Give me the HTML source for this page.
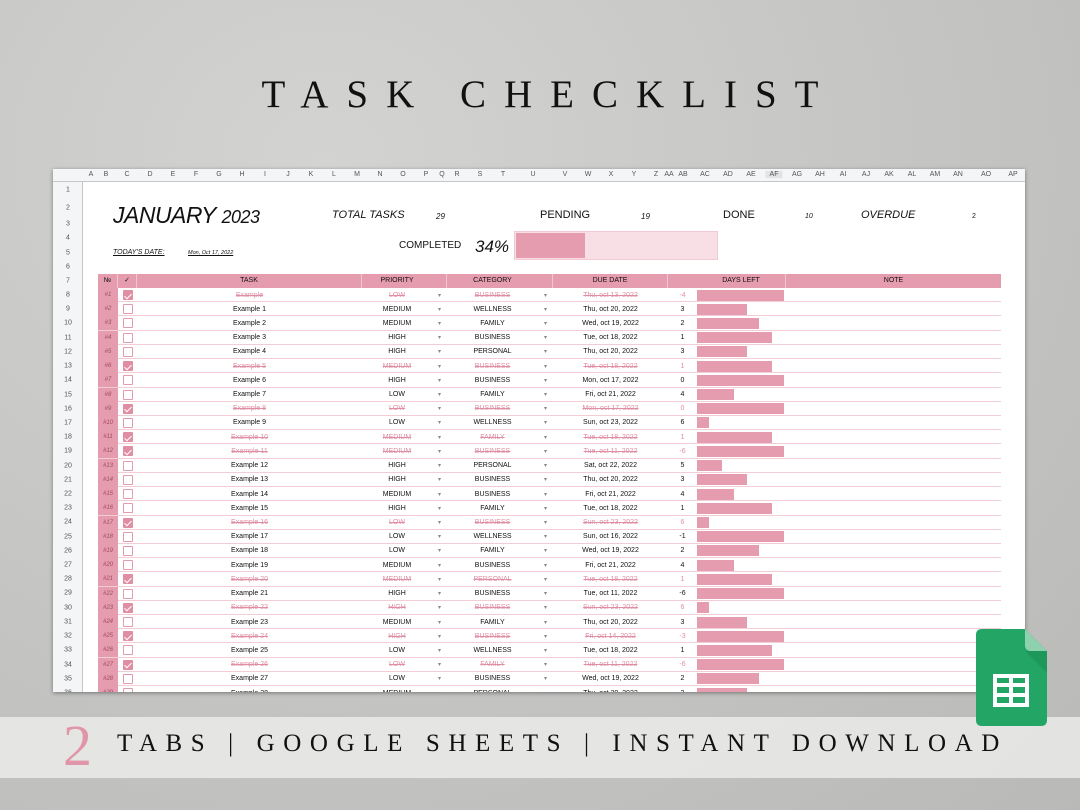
<!DOCTYPE html>
<html><head><meta charset="utf-8"><style>
*{margin:0;padding:0;box-sizing:border-box}
body{width:1080px;height:810px;overflow:hidden;position:relative;background:#c9c9c7;font-family:"Liberation Sans",sans-serif}
.bg{position:absolute;inset:0;background:radial-gradient(ellipse at 30% 20%,#d3d3d1 0,#c6c6c4 50%,#b9b9b7 100%)}
.title{position:absolute;top:72px;left:0;width:1080px;text-align:center;font-family:"Liberation Serif",serif;font-size:39px;letter-spacing:18px;color:#111;padding-left:18px}
.sheet{position:absolute;left:53px;top:169px;width:972px;height:523px;background:#fff;overflow:hidden;box-shadow:0 1px 4px rgba(0,0,0,.4)}
.colhdr{position:absolute;left:0;top:0;width:972px;height:13px;background:#f4f5f6;border-bottom:1px solid #c8c8c8;font-size:7px;color:#555}
.colhdr span{position:absolute;top:2px;transform:translateX(-50%)}
.gut{position:absolute;left:0;top:13px;width:30px;height:510px;background:#f4f5f6;border-right:1px solid #c8c8c8;font-size:7px;color:#555}
.gut span{position:absolute;left:0;width:30px;text-align:center;transform:translateY(-50%)}
.t{position:absolute;color:#111;white-space:nowrap}
.tbl{position:absolute;left:45px;top:105px;width:903px}
.r{display:grid;grid-template-columns:20px 19px 225px 70px 15px 91px 15px 115px 29px 89px 215px;height:14.22px;border-bottom:1px solid #f3cdd6;font-size:7px;color:#111;align-items:center;text-align:center}
.h{background:#e59caf;height:14px;border-bottom:none;font-size:7px}
.h div{border-right:1px solid #f2c6d1;height:100%;line-height:14px}
.n{background:#e59caf;color:#a04a60;font-size:6px;height:100%;line-height:14px;font-style:italic}
.cb{width:10px;height:10px;border:1px solid #e59caf;border-radius:1px;margin:0 auto;background:#fff}
.d .cb{background:#e08ea3;border-color:#e08ea3;position:relative}
.d .cb:after{content:"";position:absolute;left:2.5px;top:0.5px;width:3px;height:6px;border:solid #fff;border-width:0 1.3px 1.3px 0;transform:rotate(45deg)}
.d{color:#e08ea3}
.d .s{text-decoration:line-through}
.a{color:#888;font-size:6px}
.bar{height:11px;background:#e59caf;margin-left:0}
.bc{text-align:left;height:100%;display:flex;align-items:center}
.band{position:absolute;left:0;top:717px;width:1080px;height:61px;background:rgba(238,238,236,.8)}
.btxt{position:absolute;top:730px;left:117px;font-family:"Liberation Serif",serif;font-size:25px;letter-spacing:8.6px;color:#111;white-space:nowrap}
.two{position:absolute;top:712px;left:63px;font-family:"Liberation Serif",serif;font-size:58px;color:#e095a8}
</style></head><body>
<div class="bg"></div>
<div class="title">TASK CHECKLIST</div>
<div class="sheet">
<div class="colhdr">
<span style="left:38px">A</span><span style="left:53px">B</span><span style="left:74px">C</span><span style="left:97px">D</span><span style="left:120px">E</span><span style="left:143px">F</span><span style="left:166px">G</span><span style="left:189px">H</span><span style="left:212px">I</span><span style="left:235px">J</span><span style="left:258px">K</span><span style="left:281px">L</span><span style="left:304px">M</span><span style="left:327px">N</span><span style="left:350px">O</span><span style="left:373px">P</span><span style="left:389px">Q</span><span style="left:404px">R</span><span style="left:427px">S</span><span style="left:450px">T</span><span style="left:480px">U</span><span style="left:512px">V</span><span style="left:535px">W</span><span style="left:558px">X</span><span style="left:581px">Y</span><span style="left:603px">Z</span><span style="left:616px">AA</span><span style="left:630px">AB</span><span style="left:652px">AC</span><span style="left:675px">AD</span><span style="left:698px">AE</span><span style="left:721px;background:#e2e3e5;padding:0 4px">AF</span><span style="left:744px">AG</span><span style="left:767px">AH</span><span style="left:790px">AI</span><span style="left:813px">AJ</span><span style="left:836px">AK</span><span style="left:859px">AL</span><span style="left:882px">AM</span><span style="left:905px">AN</span><span style="left:933px">AO</span><span style="left:960px">AP</span>
</div>
<div class="gut">
<span style="top:8px">1</span><span style="top:26px">2</span><span style="top:42px">3</span><span style="top:56px">4</span><span style="top:71px">5</span><span style="top:85px">6</span><span style="top:99px">7</span>
<span style="top:113px">8</span><span style="top:127px">9</span><span style="top:141px">10</span><span style="top:156px">11</span><span style="top:170px">12</span><span style="top:184px">13</span><span style="top:198px">14</span><span style="top:213px">15</span><span style="top:227px">16</span><span style="top:241px">17</span><span style="top:255px">18</span><span style="top:269px">19</span><span style="top:284px">20</span><span style="top:298px">21</span><span style="top:312px">22</span><span style="top:326px">23</span><span style="top:340px">24</span><span style="top:355px">25</span><span style="top:369px">26</span><span style="top:383px">27</span><span style="top:397px">28</span><span style="top:411px">29</span><span style="top:426px">30</span><span style="top:440px">31</span><span style="top:454px">32</span><span style="top:468px">33</span><span style="top:483px">34</span><span style="top:497px">35</span><span style="top:511px">36</span>
</div>
<div class="t" style="left:60px;top:33px;font-size:23px;font-style:italic;letter-spacing:-0.5px">JANUARY <span style="font-size:18px">2023</span></div>
<div class="t" style="left:60px;top:80px;font-size:7px;font-style:italic;text-decoration:underline">TODAY'S DATE:</div>
<div class="t" style="left:135px;top:81px;font-size:5.5px;font-style:italic;text-decoration:underline">Mon, Oct 17, 2022</div>
<div class="t" style="left:279px;top:40px;font-size:11px;font-style:italic">TOTAL TASKS</div>
<div class="t" style="left:383px;top:43px;font-size:8px;font-style:italic">29</div>
<div class="t" style="left:487px;top:40px;font-size:11px">PENDING</div>
<div class="t" style="left:588px;top:43px;font-size:8px;font-style:italic">19</div>
<div class="t" style="left:670px;top:40px;font-size:11px">DONE</div>
<div class="t" style="left:752px;top:44px;font-size:7px;font-style:italic">10</div>
<div class="t" style="left:808px;top:40px;font-size:11px;font-style:italic">OVERDUE</div>
<div class="t" style="left:919px;top:44px;font-size:7px">2</div>
<div class="t" style="left:346px;top:71px;font-size:10px">COMPLETED</div>
<div class="t" style="left:422px;top:68px;font-size:17px;font-style:italic">34%</div>
<div style="position:absolute;left:461px;top:62px;width:204px;height:29px;background:#f8dfe5;border:1px solid #f3cad4"></div>
<div style="position:absolute;left:463px;top:64px;width:69px;height:25px;background:#e59caf"></div>
<div class="tbl">
<div class="r h"><div>№</div><div>✓</div><div>TASK</div><div style="border:none">PRIORITY</div><div></div><div style="border:none">CATEGORY</div><div></div><div>DUE DATE</div><div style="border:none"></div><div>DAYS LEFT</div><div style="border:none">NOTE</div></div>
<div class="r d"><div class="n">#1</div><div><div class="cb"></div></div><div class="s">Example</div><div class="s">LOW</div><div class="a">▾</div><div class="s">BUSINESS</div><div class="a">▾</div><div class="s">Thu, oct 13, 2022</div><div>-4</div><div class="bc"><div class="bar" style="width:87px"></div></div><div></div></div>
<div class="r"><div class="n">#2</div><div><div class="cb"></div></div><div>Example 1</div><div>MEDIUM</div><div class="a">▾</div><div>WELLNESS</div><div class="a">▾</div><div>Thu, oct 20, 2022</div><div>3</div><div class="bc"><div class="bar" style="width:50px"></div></div><div></div></div>
<div class="r"><div class="n">#3</div><div><div class="cb"></div></div><div>Example 2</div><div>MEDIUM</div><div class="a">▾</div><div>FAMILY</div><div class="a">▾</div><div>Wed, oct 19, 2022</div><div>2</div><div class="bc"><div class="bar" style="width:62px"></div></div><div></div></div>
<div class="r"><div class="n">#4</div><div><div class="cb"></div></div><div>Example 3</div><div>HIGH</div><div class="a">▾</div><div>BUSINESS</div><div class="a">▾</div><div>Tue, oct 18, 2022</div><div>1</div><div class="bc"><div class="bar" style="width:75px"></div></div><div></div></div>
<div class="r"><div class="n">#5</div><div><div class="cb"></div></div><div>Example 4</div><div>HIGH</div><div class="a">▾</div><div>PERSONAL</div><div class="a">▾</div><div>Thu, oct 20, 2022</div><div>3</div><div class="bc"><div class="bar" style="width:50px"></div></div><div></div></div>
<div class="r d"><div class="n">#6</div><div><div class="cb"></div></div><div class="s">Example 5</div><div class="s">MEDIUM</div><div class="a">▾</div><div class="s">BUSINESS</div><div class="a">▾</div><div class="s">Tue, oct 18, 2022</div><div>1</div><div class="bc"><div class="bar" style="width:75px"></div></div><div></div></div>
<div class="r"><div class="n">#7</div><div><div class="cb"></div></div><div>Example 6</div><div>HIGH</div><div class="a">▾</div><div>BUSINESS</div><div class="a">▾</div><div>Mon, oct 17, 2022</div><div>0</div><div class="bc"><div class="bar" style="width:87px"></div></div><div></div></div>
<div class="r"><div class="n">#8</div><div><div class="cb"></div></div><div>Example 7</div><div>LOW</div><div class="a">▾</div><div>FAMILY</div><div class="a">▾</div><div>Fri, oct 21, 2022</div><div>4</div><div class="bc"><div class="bar" style="width:37px"></div></div><div></div></div>
<div class="r d"><div class="n">#9</div><div><div class="cb"></div></div><div class="s">Example 8</div><div class="s">LOW</div><div class="a">▾</div><div class="s">BUSINESS</div><div class="a">▾</div><div class="s">Mon, oct 17, 2022</div><div>0</div><div class="bc"><div class="bar" style="width:87px"></div></div><div></div></div>
<div class="r"><div class="n">#10</div><div><div class="cb"></div></div><div>Example 9</div><div>LOW</div><div class="a">▾</div><div>WELLNESS</div><div class="a">▾</div><div>Sun, oct 23, 2022</div><div>6</div><div class="bc"><div class="bar" style="width:12px"></div></div><div></div></div>
<div class="r d"><div class="n">#11</div><div><div class="cb"></div></div><div class="s">Example 10</div><div class="s">MEDIUM</div><div class="a">▾</div><div class="s">FAMILY</div><div class="a">▾</div><div class="s">Tue, oct 18, 2022</div><div>1</div><div class="bc"><div class="bar" style="width:75px"></div></div><div></div></div>
<div class="r d"><div class="n">#12</div><div><div class="cb"></div></div><div class="s">Example 11</div><div class="s">MEDIUM</div><div class="a">▾</div><div class="s">BUSINESS</div><div class="a">▾</div><div class="s">Tue, oct 11, 2022</div><div>-6</div><div class="bc"><div class="bar" style="width:87px"></div></div><div></div></div>
<div class="r"><div class="n">#13</div><div><div class="cb"></div></div><div>Example 12</div><div>HIGH</div><div class="a">▾</div><div>PERSONAL</div><div class="a">▾</div><div>Sat, oct 22, 2022</div><div>5</div><div class="bc"><div class="bar" style="width:25px"></div></div><div></div></div>
<div class="r"><div class="n">#14</div><div><div class="cb"></div></div><div>Example 13</div><div>HIGH</div><div class="a">▾</div><div>BUSINESS</div><div class="a">▾</div><div>Thu, oct 20, 2022</div><div>3</div><div class="bc"><div class="bar" style="width:50px"></div></div><div></div></div>
<div class="r"><div class="n">#15</div><div><div class="cb"></div></div><div>Example 14</div><div>MEDIUM</div><div class="a">▾</div><div>BUSINESS</div><div class="a">▾</div><div>Fri, oct 21, 2022</div><div>4</div><div class="bc"><div class="bar" style="width:37px"></div></div><div></div></div>
<div class="r"><div class="n">#16</div><div><div class="cb"></div></div><div>Example 15</div><div>HIGH</div><div class="a">▾</div><div>FAMILY</div><div class="a">▾</div><div>Tue, oct 18, 2022</div><div>1</div><div class="bc"><div class="bar" style="width:75px"></div></div><div></div></div>
<div class="r d"><div class="n">#17</div><div><div class="cb"></div></div><div class="s">Example 16</div><div class="s">LOW</div><div class="a">▾</div><div class="s">BUSINESS</div><div class="a">▾</div><div class="s">Sun, oct 23, 2022</div><div>6</div><div class="bc"><div class="bar" style="width:12px"></div></div><div></div></div>
<div class="r"><div class="n">#18</div><div><div class="cb"></div></div><div>Example 17</div><div>LOW</div><div class="a">▾</div><div>WELLNESS</div><div class="a">▾</div><div>Sun, oct 16, 2022</div><div>-1</div><div class="bc"><div class="bar" style="width:87px"></div></div><div></div></div>
<div class="r"><div class="n">#19</div><div><div class="cb"></div></div><div>Example 18</div><div>LOW</div><div class="a">▾</div><div>FAMILY</div><div class="a">▾</div><div>Wed, oct 19, 2022</div><div>2</div><div class="bc"><div class="bar" style="width:62px"></div></div><div></div></div>
<div class="r"><div class="n">#20</div><div><div class="cb"></div></div><div>Example 19</div><div>MEDIUM</div><div class="a">▾</div><div>BUSINESS</div><div class="a">▾</div><div>Fri, oct 21, 2022</div><div>4</div><div class="bc"><div class="bar" style="width:37px"></div></div><div></div></div>
<div class="r d"><div class="n">#21</div><div><div class="cb"></div></div><div class="s">Example 20</div><div class="s">MEDIUM</div><div class="a">▾</div><div class="s">PERSONAL</div><div class="a">▾</div><div class="s">Tue, oct 18, 2022</div><div>1</div><div class="bc"><div class="bar" style="width:75px"></div></div><div></div></div>
<div class="r"><div class="n">#22</div><div><div class="cb"></div></div><div>Example 21</div><div>HIGH</div><div class="a">▾</div><div>BUSINESS</div><div class="a">▾</div><div>Tue, oct 11, 2022</div><div>-6</div><div class="bc"><div class="bar" style="width:87px"></div></div><div></div></div>
<div class="r d"><div class="n">#23</div><div><div class="cb"></div></div><div class="s">Example 22</div><div class="s">HIGH</div><div class="a">▾</div><div class="s">BUSINESS</div><div class="a">▾</div><div class="s">Sun, oct 23, 2022</div><div>6</div><div class="bc"><div class="bar" style="width:12px"></div></div><div></div></div>
<div class="r"><div class="n">#24</div><div><div class="cb"></div></div><div>Example 23</div><div>MEDIUM</div><div class="a">▾</div><div>FAMILY</div><div class="a">▾</div><div>Thu, oct 20, 2022</div><div>3</div><div class="bc"><div class="bar" style="width:50px"></div></div><div></div></div>
<div class="r d"><div class="n">#25</div><div><div class="cb"></div></div><div class="s">Example 24</div><div class="s">HIGH</div><div class="a">▾</div><div class="s">BUSINESS</div><div class="a">▾</div><div class="s">Fri, oct 14, 2022</div><div>-3</div><div class="bc"><div class="bar" style="width:87px"></div></div><div></div></div>
<div class="r"><div class="n">#26</div><div><div class="cb"></div></div><div>Example 25</div><div>LOW</div><div class="a">▾</div><div>WELLNESS</div><div class="a">▾</div><div>Tue, oct 18, 2022</div><div>1</div><div class="bc"><div class="bar" style="width:75px"></div></div><div></div></div>
<div class="r d"><div class="n">#27</div><div><div class="cb"></div></div><div class="s">Example 26</div><div class="s">LOW</div><div class="a">▾</div><div class="s">FAMILY</div><div class="a">▾</div><div class="s">Tue, oct 11, 2022</div><div>-6</div><div class="bc"><div class="bar" style="width:87px"></div></div><div></div></div>
<div class="r"><div class="n">#28</div><div><div class="cb"></div></div><div>Example 27</div><div>LOW</div><div class="a">▾</div><div>BUSINESS</div><div class="a">▾</div><div>Wed, oct 19, 2022</div><div>2</div><div class="bc"><div class="bar" style="width:62px"></div></div><div></div></div>
<div class="r"><div class="n">#29</div><div><div class="cb"></div></div><div>Example 28</div><div>MEDIUM</div><div class="a">▾</div><div>PERSONAL</div><div class="a">▾</div><div>Thu, oct 20, 2022</div><div>3</div><div class="bc"><div class="bar" style="width:50px"></div></div><div></div></div>
</div>
</div>
<div class="band"></div>
<div class="two">2</div>
<div class="btxt">TABS | GOOGLE SHEETS | INSTANT DOWNLOAD</div>
<svg style="position:absolute;left:976px;top:629px" width="71" height="97" viewBox="0 0 71 97">
<path d="M6 0H49L71 22V91Q71 97 65 97H6Q0 97 0 91V6Q0 0 6 0Z" fill="#22a565"/>
<path d="M49 0V16Q49 22 55 22H71Z" fill="#8ed1ae"/>
<path d="M49 22L71 44V22Z" fill="#1a8a50" opacity=".5"/>
<rect x="17" y="45" width="36" height="33" fill="#fff"/>
<g fill="#22a565"><rect x="21" y="49" width="12" height="5"/><rect x="37" y="49" width="12" height="5"/><rect x="21" y="58" width="12" height="6"/><rect x="37" y="58" width="12" height="6"/><rect x="21" y="68" width="12" height="6"/><rect x="37" y="68" width="12" height="6"/></g>
</svg>
</body></html>
